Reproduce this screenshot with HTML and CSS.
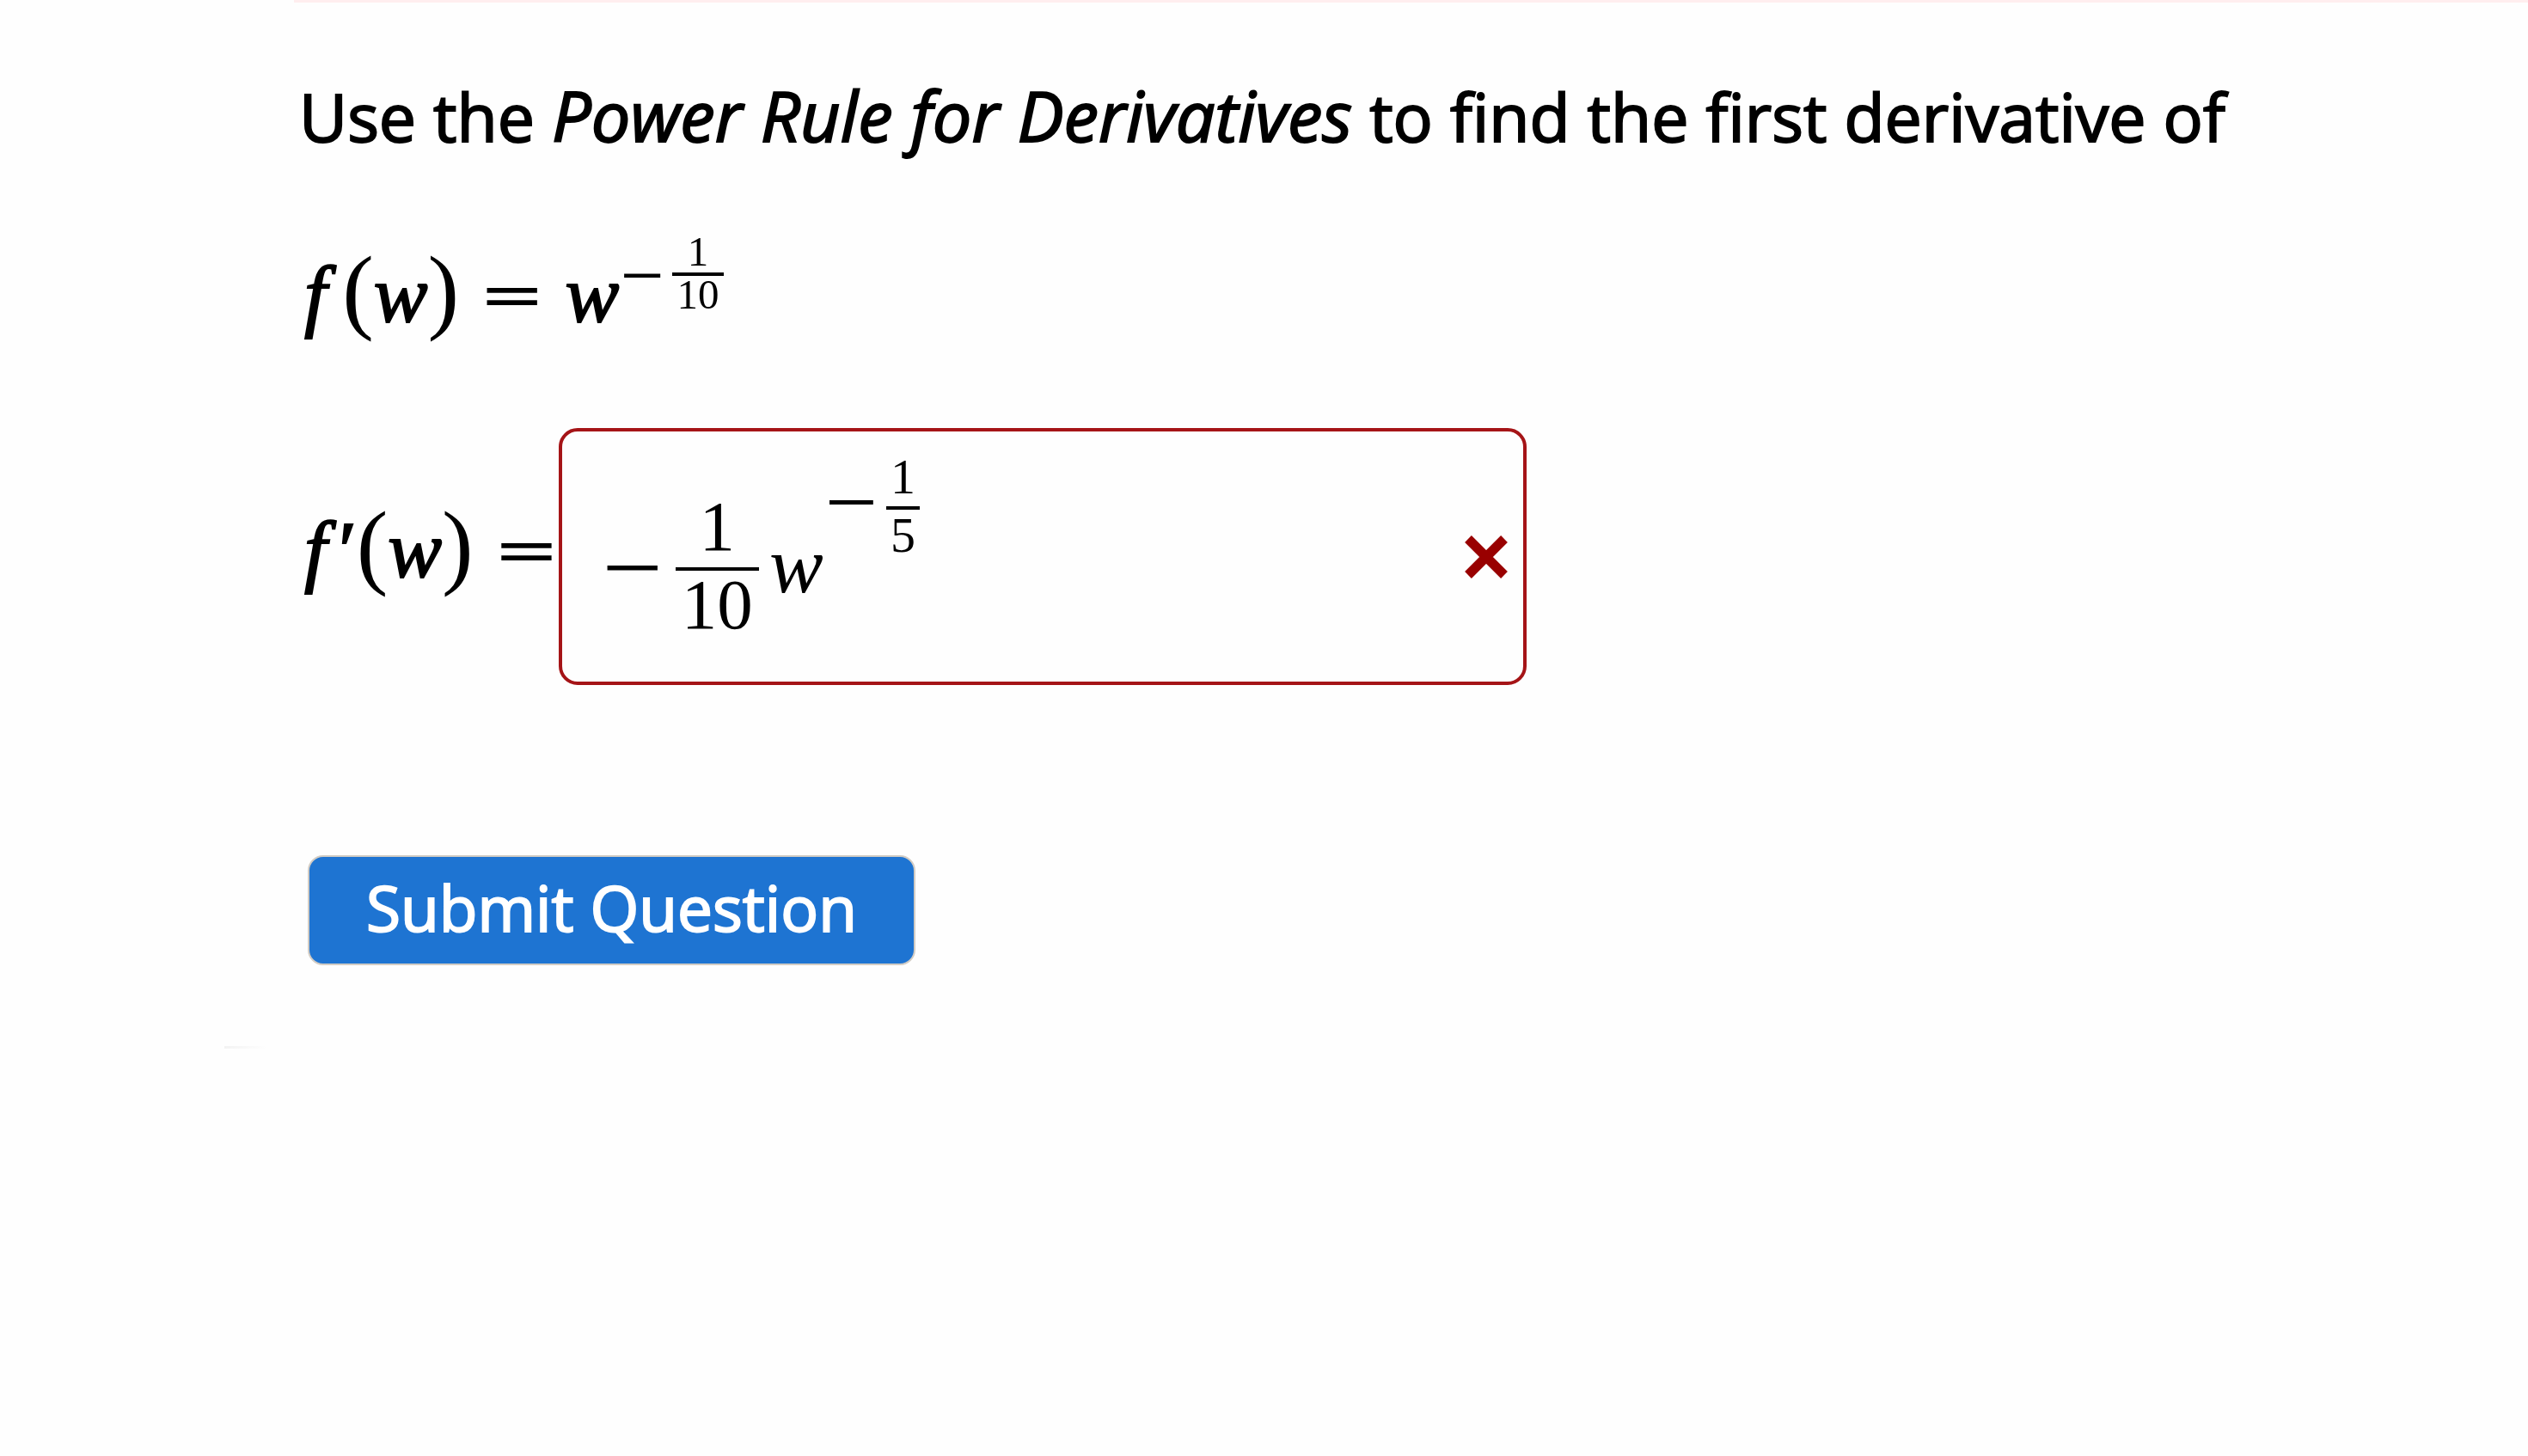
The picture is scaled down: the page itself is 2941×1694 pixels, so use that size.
FILE: index.html
```html
<!DOCTYPE html>
<html lang="en">
<head>
    <meta charset="UTF-8">
    <meta name="viewport" content="width=device-width, initial-scale=1.0">
    <title>Power Rule for Derivatives</title>
    <link rel="stylesheet" href="styles.css">
</head>
<body>
    <form class="question">
        <p class="prompt">Use the <em>Power Rule for Derivatives</em> to find the first derivative of</p>
        <div class="math given"><i class="fn">f</i><span class="paren">(</span><i>w</i><span class="paren">)</span><span class="op equals">=</span><i>w</i><span class="exponent"><span class="op">−</span><span class="frac"><span class="num">1</span><span class="den">10</span></span></span></div>
        <div class="answer">
            <div class="math label" id="answer-label"><i class="fn">f</i><span class="prime">′</span><span class="paren">(</span><i>w</i><span class="paren">)</span><span class="op equals">=</span></div>
            <div class="answer-box">
                <div class="math field" role="textbox" contenteditable="true" spellcheck="false" aria-labelledby="answer-label"><span class="op">−</span><span class="frac"><span class="num">1</span><span class="den">10</span></span><i>w</i><span class="exponent"><span class="op">−</span><span class="frac"><span class="num">1</span><span class="den">5</span></span></span></div>
                <svg class="wrong" viewBox="0 0 52 52" role="img" aria-label="Incorrect">
                    <path d="M5 5L47 47M47 5L5 47" />
                </svg>
            </div>
        </div>
        <button type="submit" class="submit">Submit Question</button>
    </form>
    <div class="divider"></div>
</body>
</html>
```
FILE: styles.css
```css
body {
    margin: 0;
    background: #fefefe;
    color: #000;
    font-family: "Trebuchet MS", "Open Sans", sans-serif;
    font-size: 77px;
}
.question {
    margin-left: 342px;
    padding: 72px 6px 0;
    border-top: 3px solid #ffeeef;
}
.prompt {
    margin: 0;
    line-height: 118px;
    -webkit-text-stroke: 2px #000;
}
.prompt em {
    font-size: 81px;
}

/* math */
.math {
    font-family: "Liberation Serif", serif;
    font-size: 94px;
    line-height: 100px;
    white-space: nowrap;
    -webkit-text-stroke: 2px #000;
}
.fn {
    margin: 0 18px 0 6px;
}
.paren {
    font-size: 110px;
    -webkit-text-stroke: 0;
}
.op {
    font-family: "DejaVu Sans", sans-serif;
    font-size: 90px;
    font-weight: 200;
    line-height: 60px;
    -webkit-text-stroke: 2px #000;
}
.equals {
    margin-left: 24px;
}
.given .equals {
    margin-right: 24px;
}
.frac {
    display: inline-block;
    text-align: center;
    -webkit-text-stroke: 0;
}
.num,
.den {
    display: block;
}
.num {
    border-bottom: 4px solid #000;
}
.given {
    margin-top: 76px;
}
.given .exponent .op {
    font-size: 64px;
    vertical-align: 33px;
}
.given .exponent .frac {
    margin-left: 8px;
    font-size: 49px;
    line-height: 44px;
    vertical-align: 15px;
}
.given .num {
    padding: 0 18px 2px;
}

/* answer row */
.answer {
    display: flex;
    align-items: center;
    margin-top: 106px;
}
.label {
    padding-bottom: 22px;
}
.label .fn {
    margin-right: 14px;
}
.answer-box {
    display: flex;
    align-items: center;
    justify-content: space-between;
    box-sizing: border-box;
    width: 1126px;
    padding: 0 17px 0 44px;
    border: 4px solid #a51417;
    border-radius: 22px;
}
.field {
    padding: 23px 0 51px;
    outline: none;
    -webkit-text-stroke: 0;
}
.field .frac {
    margin: 0 12px;
    font-size: 83px;
    line-height: 78px;
    vertical-align: -42px;
}
.field .num {
    padding: 0 28px 9px;
}
.field .exponent .op {
    font-size: 78px;
    vertical-align: 80px;
}
.field .exponent .frac {
    margin: 0 8px;
    font-size: 58px;
    line-height: 60px;
    vertical-align: 47px;
}
.field .exponent .num {
    padding: 0 5px 4px;
}
.wrong {
    width: 52px;
    height: 52px;
}
.wrong path {
    fill: none;
    stroke: #900;
    stroke-width: 11;
}

.submit {
    display: block;
    margin: 198px 0 0 10px;
    padding: 0 66px 6px;
    border: 2px solid #d2ccc4;
    border-radius: 18px;
    background: #1e74d2;
    color: #fff;
    font: inherit;
    font-size: 73px;
    line-height: 118px;
    -webkit-text-stroke: 2px #fff;
}
.divider {
    width: 50px;
    height: 3px;
    margin: 94px 0 0 261px;
    background: linear-gradient(to right, #f3f3f3, #fefefe);
}
```
